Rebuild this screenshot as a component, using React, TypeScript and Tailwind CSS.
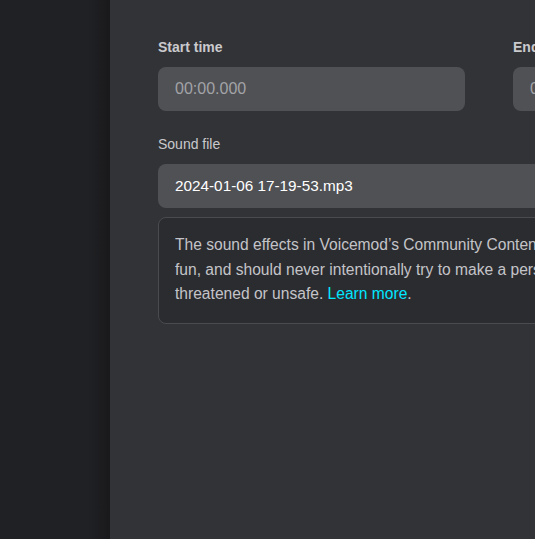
export default function App() {
  return (
    <div className="flex h-[539px] w-[535px] overflow-hidden bg-[#323337] font-['Liberation_Sans',Arial,sans-serif]">
      {/* Sidebar */}
      <aside className="h-full w-[110px] shrink-0 bg-[linear-gradient(to_right,#202124_0%,#202124_80%,#19191c_100%)]" />

      {/* Main */}
      <main className="min-w-0 flex-1 pl-12 pt-[39px]">
        <div className="w-[662px]">
          <div className="grid grid-cols-2 gap-12">
            <div>
              <label className="block text-[14px] font-bold leading-4 text-[#cacacd]">Start time</label>
              <div className="mt-3 flex h-[44px] items-center rounded-lg bg-[#505155] px-[17px] text-[16px] text-[#a2a3a7]">
                00:00.000
              </div>
            </div>
            <div>
              <label className="block text-[14px] font-bold leading-4 text-[#cacacd]">End time</label>
              <div className="mt-3 flex h-[44px] items-center rounded-lg bg-[#505155] px-[17px] text-[16px] text-[#a2a3a7]">
                00:00.000
              </div>
            </div>
          </div>

          <label className="mt-[25px] block text-[14px] leading-4 text-[#c9c9cc]">Sound file</label>
          <div className="mt-3 flex h-[44px] items-center rounded-lg bg-[#505155] px-[17px] text-[15.3px] font-medium text-white">
            2024-01-06 17-19-53.mp3
          </div>

          <div className="mt-[9px] rounded-lg border border-[#4a4b4f] bg-[#2b2c30] px-4 pb-[16px] pt-[15px] text-[15.6px] leading-[24.5px] text-[#c4c4c8]">
            <span className="block">The sound effects in Voicemod’s Community Content are meant to be</span>
            <span className="block">fun, and should never intentionally try to make a person feel</span>
            <span className="block">
              threatened or unsafe. <a href="#" className="text-[#00e6ff]">Learn more</a>.
            </span>
          </div>
        </div>
      </main>
    </div>
  );
}
